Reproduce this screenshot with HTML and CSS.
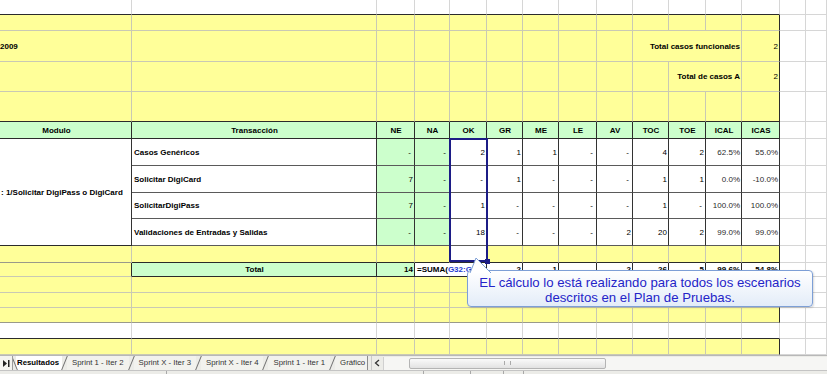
FILE: index.html
```html
<!DOCTYPE html>
<html lang="es">
<head>
    <meta charset="UTF-8">
    <title>Resultados</title>
    <link rel="stylesheet" href="styles.css">
</head>
<body>
    <div class="sheet">
        <table class="grid">
            <colgroup>
                <col class="c-a"><col class="c-b"><col class="c-ne"><col class="c-na"><col class="c-ok">
                <col class="c-gr"><col class="c-me"><col class="c-le"><col class="c-av"><col class="c-toc">
                <col class="c-toe"><col class="c-ical"><col class="c-icas"><col class="c-n"><col class="c-o">
            </colgroup>
            <tbody>
                <!-- fila superior sin relleno -->
                <tr class="h15">
                    <td class="w bb"></td><td class="w bb"></td><td class="w bb"></td><td class="w bb"></td><td class="w bb"></td>
                    <td class="w bb"></td><td class="w bb"></td><td class="w bb"></td><td class="w bb"></td><td class="w bb"></td>
                    <td class="w bb"></td><td class="w bb"></td><td class="w bb"></td><td class="w"></td><td class="w"></td>
                </tr>
                <tr class="h16">
                    <td class="y"></td><td class="y"></td><td class="y"></td><td class="y"></td><td class="y"></td>
                    <td class="y"></td><td class="y"></td><td class="y"></td><td class="y"></td><td class="y"></td>
                    <td class="y"></td><td class="y"></td><td class="y br"></td><td class="w"></td><td class="w"></td>
                </tr>
                <tr class="h31">
                    <td class="y b year">2009</td><td class="y"></td><td class="y"></td><td class="y"></td><td class="y"></td>
                    <td class="y"></td><td class="y"></td><td class="y"></td><td class="y"></td>
                    <td class="y b r" colspan="3">Total casos funcionales</td>
                    <td class="y r br">2</td><td class="w"></td><td class="w"></td>
                </tr>
                <tr class="h30">
                    <td class="y"></td><td class="y"></td><td class="y"></td><td class="y"></td><td class="y"></td>
                    <td class="y"></td><td class="y"></td><td class="y"></td><td class="y"></td><td class="y"></td>
                    <td class="y b r" colspan="2">Total de casos A</td>
                    <td class="y r br">2</td><td class="w"></td><td class="w"></td>
                </tr>
                <tr class="h30">
                    <td class="y bb"></td><td class="y bb"></td><td class="y bb"></td><td class="y bb"></td><td class="y bb"></td>
                    <td class="y bb"></td><td class="y bb"></td><td class="y bb"></td><td class="y bb"></td><td class="y bb"></td>
                    <td class="y bb"></td><td class="y bb"></td><td class="y bb br"></td><td class="w"></td><td class="w"></td>
                </tr>

                <!-- cabecera -->
                <tr class="h17">
                    <td class="hd hd-mod">Modulo</td><td class="hd">Transacción</td><td class="hd">NE</td><td class="hd">NA</td><td class="hd">OK</td>
                    <td class="hd">GR</td><td class="hd">ME</td><td class="hd">LE</td><td class="hd">AV</td><td class="hd">TOC</td>
                    <td class="hd">TOE</td><td class="hd">ICAL</td><td class="hd">ICAS</td><td class="w"></td><td class="w"></td>
                </tr>

                <!-- datos -->
                <tr class="h27">
                    <td class="d b modulo" rowspan="4">: 1/Solicitar DigiPass o DigiCard</td>
                    <td class="d b txt">Casos Genéricos</td>
                    <td class="d dg dash">-</td><td class="d dg dash">-</td><td class="d">2</td><td class="d">1</td><td class="d">1</td>
                    <td class="d dash">-</td><td class="d dash">-</td><td class="d">4</td><td class="d">2</td>
                    <td class="d pct">62.5%</td><td class="d pct">55.0%</td><td class="w"></td><td class="w"></td>
                </tr>
                <tr class="h27">
                    <td class="d b txt">Solicitar DigiCard</td>
                    <td class="d dg">7</td><td class="d dg dash">-</td><td class="d dash">-</td><td class="d">1</td><td class="d dash">-</td>
                    <td class="d dash">-</td><td class="d dash">-</td><td class="d">1</td><td class="d">1</td>
                    <td class="d pct">0.0%</td><td class="d pct">-10.0%</td><td class="w"></td><td class="w"></td>
                </tr>
                <tr class="h26">
                    <td class="d b txt">SolicitarDigiPass</td>
                    <td class="d dg">7</td><td class="d dg dash">-</td><td class="d">1</td><td class="d dash">-</td><td class="d dash">-</td>
                    <td class="d dash">-</td><td class="d dash">-</td><td class="d">1</td><td class="d dash">-</td>
                    <td class="d pct">100.0%</td><td class="d pct">100.0%</td><td class="w"></td><td class="w"></td>
                </tr>
                <tr class="h27">
                    <td class="d b txt">Validaciones de Entradas y Salidas</td>
                    <td class="d dg dash">-</td><td class="d dg dash">-</td><td class="d">18</td><td class="d dash">-</td><td class="d dash">-</td>
                    <td class="d dash">-</td><td class="d">2</td><td class="d">20</td><td class="d">2</td>
                    <td class="d pct">99.0%</td><td class="d pct">99.0%</td><td class="w"></td><td class="w"></td>
                </tr>

                <tr class="h17">
                    <td class="y bm"></td><td class="y bb"></td><td class="y bb"></td><td class="y bb"></td><td class="w bb"></td>
                    <td class="y bb"></td><td class="y bb"></td><td class="y bb"></td><td class="y bb"></td><td class="y bb"></td>
                    <td class="y bb"></td><td class="y bb"></td><td class="y bb br"></td><td class="w"></td><td class="w"></td>
                </tr>

                <!-- total -->
                <tr class="h14">
                    <td class="y br"></td>
                    <td class="t g b center">Total</td>
                    <td class="t g b r">14</td>
                    <td class="t b formula" colspan="2">=SUMA(<span class="ref">G32:G</span></td>
                    <td class="t b r">2</td><td class="t b r">1</td><td class="t b r dash">-</td><td class="t b r">2</td>
                    <td class="t b r">26</td><td class="t b r">5</td><td class="t b r">99.6%</td><td class="t b r">54.8%</td>
                    <td class="w"></td><td class="w"></td>
                </tr>

                <tr class="h16">
                    <td class="y"></td><td class="y"></td><td class="y"></td><td class="y"></td><td class="y"></td>
                    <td class="y"></td><td class="y"></td><td class="y"></td><td class="y"></td><td class="y"></td>
                    <td class="y"></td><td class="y"></td><td class="y br"></td><td class="w"></td><td class="w"></td>
                </tr>
                <tr class="h15">
                    <td class="y"></td><td class="y"></td><td class="y"></td><td class="y"></td><td class="y"></td>
                    <td class="y"></td><td class="y"></td><td class="y"></td><td class="y"></td><td class="y"></td>
                    <td class="y"></td><td class="y"></td><td class="y br"></td><td class="w"></td><td class="w"></td>
                </tr>
                <tr class="h15">
                    <td class="y bm"></td><td class="y bm"></td><td class="y bm"></td><td class="y bm"></td><td class="y bm"></td>
                    <td class="y bm"></td><td class="y bm"></td><td class="y bm"></td><td class="y bm"></td><td class="y bm"></td>
                    <td class="y bm"></td><td class="y bm"></td><td class="y bm br"></td><td class="w"></td><td class="w"></td>
                </tr>
                <tr class="h16">
                    <td class="w bb"></td><td class="w bb"></td><td class="w bb"></td><td class="w bb"></td><td class="w bb"></td>
                    <td class="w bb"></td><td class="w bb"></td><td class="w bb"></td><td class="w bb"></td><td class="w bb"></td>
                    <td class="w bb"></td><td class="w bb"></td><td class="w bb"></td><td class="w"></td><td class="w"></td>
                </tr>
                <tr class="h16">
                    <td class="y"></td><td class="y"></td><td class="y"></td><td class="y"></td><td class="y"></td>
                    <td class="y"></td><td class="y"></td><td class="y"></td><td class="y"></td><td class="y"></td>
                    <td class="y"></td><td class="y"></td><td class="y br"></td><td class="w"></td><td class="w"></td>
                </tr>
            </tbody>
        </table>

        <!-- rango de la formula -->
        <div class="range"><span class="handle"></span></div>

        <!-- comentario -->
        <div class="callout">
            EL cálculo lo está realizando para todos los escenarios<br>
            descritos en el Plan de Pruebas.
        </div>
        <svg class="tail" width="30" height="18" viewBox="0 0 30 18">
            <polygon points="4,16 10,1 25,16" fill="#ffffff"/>
            <polyline points="4,16 10,1 25,16" fill="none" stroke="#7d9fd6" stroke-width="1"/>
        </svg>
    </div>

    <div class="tabbar">
        <div class="tab-nav">
            <svg width="9" height="9" viewBox="0 0 9 9">
                <polygon points="1,1 5,4.5 1,8" fill="#222"/>
                <rect x="6" y="1" width="1.5" height="7" fill="#222"/>
            </svg>
        </div>
        <div class="tabs">
            <span class="sep back"></span>
            <span class="tab active">Resultados</span>
            <span class="sep"></span>
            <span class="tab">Sprint 1 - Iter 2</span>
            <span class="sep"></span>
            <span class="tab">Sprint X - Iter 3</span>
            <span class="sep"></span>
            <span class="tab">Sprint X - Iter 4</span>
            <span class="sep"></span>
            <span class="tab">Sprint 1 - Iter 1</span>
            <span class="sep"></span>
            <span class="tab">Gráfico</span>
        </div>
        <div class="tab-split"></div>
        <div class="hscroll">
            <svg class="chev" width="6" height="8" viewBox="0 0 6 8">
                <polyline points="5,1 1.5,4 5,7" fill="none" stroke="#333" stroke-width="1.3"/>
            </svg>
            <div class="track">
                <div class="thumb"><span class="grip"></span></div>
            </div>
        </div>
    </div>
    <div class="status">
        <span class="panel p1"></span>
        <span class="panel p2"></span>
        <span class="panel p3"></span>
        <span class="panel p4"></span>
        <span class="panel p5"></span>
    </div>
</body>
</html>
```

FILE: styles.css
```css
body {
    margin: 0;
    width: 827px;
    height: 374px;
    overflow: hidden;
    background-color: #fff;
    font-family: "Liberation Sans", Arial, sans-serif;
}

.sheet {
    position: relative;
    height: 355px;
}

/* hoja de calculo */
.grid {
    border-collapse: separate;
    border-spacing: 0;
    table-layout: fixed;
    width: 827px;
    font-size: 8px;
    color: #000;
}

.c-a { width: 132px; }
.c-b { width: 245px; }
.c-ne { width: 38px; }
.c-na { width: 35px; }
.c-ok { width: 37px; }
.c-gr { width: 36px; }
.c-me { width: 36px; }
.c-le { width: 38px; }
.c-av { width: 36px; }
.c-toc { width: 36px; }
.c-toe { width: 37px; }
.c-ical { width: 36px; }
.c-icas { width: 38px; }
.c-n { width: 26px; }
.c-o { width: 21px; }

.h14 { height: 14px; }
.h15 { height: 15px; }
.h16 { height: 16px; }
.h17 { height: 17px; }
.h26 { height: 26px; }
.h27 { height: 27px; }
.h30 { height: 30px; }
.h31 { height: 31px; }

.grid td {
    box-sizing: border-box;
    padding: 0 1px 0 2px;
    border-right: 1px solid #d6d6d6;
    border-bottom: 1px solid #d6d6d6;
    white-space: nowrap;
    overflow: hidden;
    line-height: 9px;
    vertical-align: middle;
}

.grid td.y {
    background-color: #ffff99;
    border-right-color: #c9c9b4;
    border-bottom-color: #c9c9b4;
}

.grid td.w {
    background-color: #fff;
}

.grid td.bb { border-bottom-color: #2b2b2b; }
.grid td.bm { border-bottom-color: #9a9a8a; }
.grid td.br { border-right-color: #2b2b2b; }

.b { font-weight: bold; }
.r { text-align: right; }
.center { text-align: center; }

.grid td.year { padding-left: 0; }

/* cabecera */
.grid td.hd {
    background-color: #ccffcc;
    border-right-color: #2b2b2b;
    border-bottom-color: #2b2b2b;
    font-weight: bold;
    text-align: center;
}

.grid td.hd-mod { padding-right: 20px; }

/* celdas de datos */
.grid td.d {
    background-color: #fff;
    border-right-color: #333;
    border-bottom-color: #5a5a5a;
    text-align: right;
}

.grid td.dg { background-color: #ccffcc; }
.grid td.txt { text-align: left; }
.grid td.dash { padding-right: 3px; }
.grid td.pct { color: #2a2a2a; }

.grid td.modulo {
    text-align: left;
    padding-left: 1px;
    border-bottom-color: #2b2b2b;
}

/* fila de total */
.grid td.t {
    background-color: #fff;
    border-right-color: #2b2b2b;
    border-bottom-color: #2b2b2b;
}

.grid td.g { background-color: #ccffcc; }

.grid td.formula {
    text-align: left;
    padding-left: 2px;
}

.ref { color: #1f3bd1; }

/* rango marcado por la formula */
.range {
    position: absolute;
    left: 449px;
    top: 138px;
    width: 39px;
    height: 124px;
    box-sizing: border-box;
    border: 2px solid #1c1c86;
}

.handle {
    position: absolute;
    right: -4px;
    bottom: -4px;
    width: 5px;
    height: 5px;
    background-color: #1c1c86;
}

/* comentario */
.callout {
    position: absolute;
    left: 467px;
    top: 270px;
    width: 346px;
    height: 37px;
    box-sizing: border-box;
    padding-top: 4px;
    border: 1px solid #7d9fd6;
    border-radius: 4px;
    background: linear-gradient(#ffffff, #e3ecf8);
    box-shadow: 1px 1px 2px rgba(0, 0, 0, 0.15);
    color: #2424c8;
    font-size: 13.2px;
    line-height: 15px;
    text-align: center;
}

.tail {
    position: absolute;
    left: 466px;
    top: 257px;
}

/* pestanas */
.tabbar {
    display: flex;
    height: 15px;
    background-color: #ecece8;
    border-top: 1px solid #b8b8b8;
    box-sizing: border-box;
}

.tab-nav {
    width: 12px;
    flex-shrink: 0;
    display: flex;
    align-items: center;
    justify-content: center;
    border-right: 1px solid #9c9c9c;
    background-color: #f4f4f0;
}

.tabs {
    width: 354px;
    flex-shrink: 0;
    display: flex;
    align-items: stretch;
    overflow: hidden;
    font-size: 7.8px;
}

.tab {
    flex-shrink: 0;
    padding: 0 5px;
    line-height: 13px;
    color: #333;
    background-color: #f2f2ee;
}

.tab.active {
    padding: 0 3px 0 1px;
    background-color: #fff;
    color: #000;
    font-weight: bold;
}

.sep {
    flex-shrink: 0;
    width: 1px;
    margin: 0 2px;
    background-color: #707070;
    transform: skewX(-22deg);
}

.sep.back {
    margin: 0 1px;
    transform: skewX(22deg);
}

.tab-split {
    width: 3px;
    flex-shrink: 0;
    border-left: 1px solid #8c8c8c;
    border-right: 1px solid #c8c8c8;
}

.hscroll {
    flex: 1;
    display: flex;
    align-items: center;
}

.chev {
    margin: 0 3px 0 2px;
}

.track {
    flex: 1;
    height: 13px;
    background-color: #f6f6f4;
    border-left: 1px solid #d0d0d0;
    padding-left: 25px;
    display: flex;
    align-items: center;
}

.thumb {
    width: 197px;
    height: 11px;
    box-sizing: border-box;
    border: 1px solid #b4b4b4;
    border-radius: 2px;
    background: linear-gradient(#fafafa, #e2e2e2);
    display: flex;
    align-items: center;
    justify-content: center;
}

.grip {
    width: 5px;
    height: 4px;
    border-left: 1px solid #aaa;
    border-right: 1px solid #aaa;
}

/* barra de estado */
.status {
    display: flex;
    height: 4px;
    background-color: #ecece8;
    border-top: 1px solid #c4c4c4;
}

.panel { border-right: 1px solid #a8a8a8; }
.p1 { width: 166px; }
.p2 { width: 256px; }
.p3 { width: 46px; }
.p4 { width: 32px; }
.p5 { width: 19px; }
```
